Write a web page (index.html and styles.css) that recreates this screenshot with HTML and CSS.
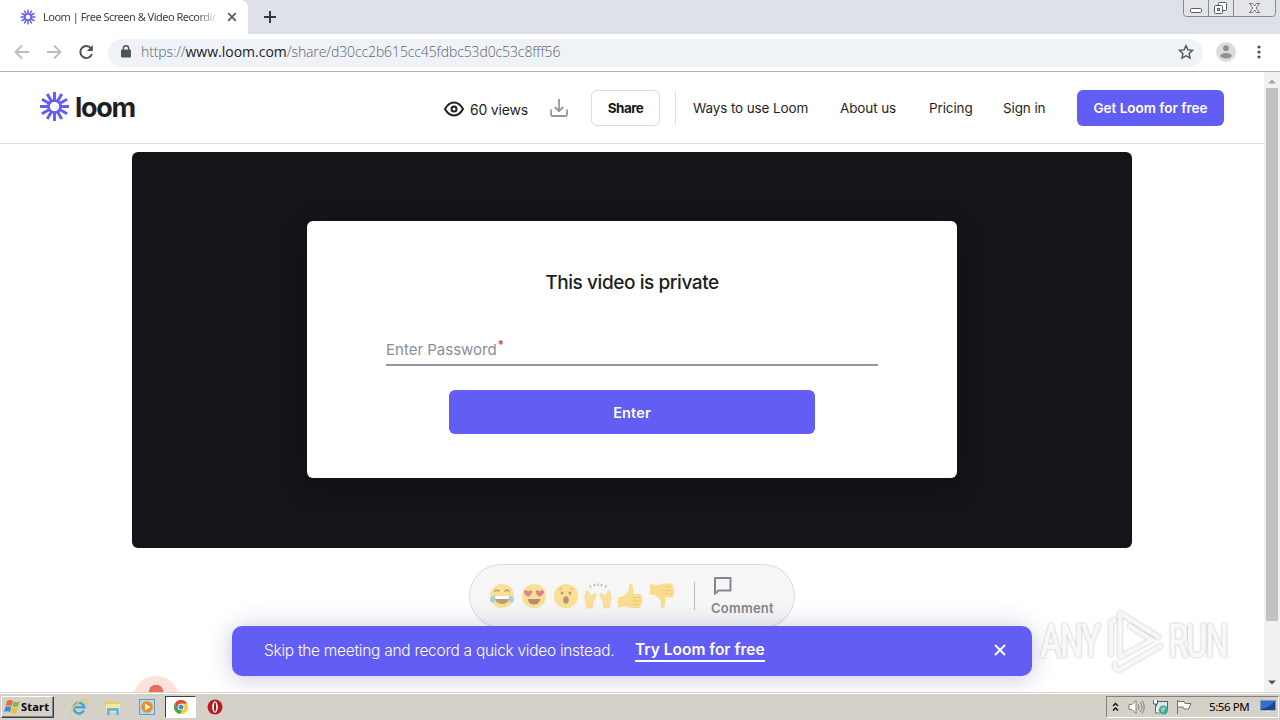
FILE: index.html
```html
<!DOCTYPE html>
<html lang="en">
<head>
<meta charset="utf-8">
<title>Loom | Free Screen &amp; Video Recording</title>
<link rel="stylesheet" href="styles.css">
</head>
<body>
<svg class="defs" width="0" height="0" aria-hidden="true">
  <symbol id="sun" viewBox="0 0 32 32">
    <g fill="none" stroke="#625df5" stroke-width="3">
      <path d="M16 1v10M16 21v10M1 16h10M21 16h10"/>
      <path d="M16 1v10M16 21v10M1 16h10M21 16h10" transform="rotate(30 16 16)"/>
      <path d="M16 1v10M16 21v10M1 16h10M21 16h10" transform="rotate(60 16 16)"/>
      <circle cx="16" cy="16" r="6.3" stroke-width="2.6"/>
    </g>
  </symbol>
</svg>
<div class="tabstrip">
  <div class="tab">
    <svg class="favicon" width="16" height="16"><use href="#sun"/></svg>
    <span class="tab-title">Loom | Free Screen &amp; Video Recordin</span>
    <svg class="tab-close" width="10" height="10" viewBox="0 0 10 10"><path d="M1.2 1.2l7.6 7.6M8.800 1.200l-7.600 7.600" stroke="#5a5d61" stroke-width="1.8"/></svg>
  </div>
  <svg class="new-tab" width="12" height="12" viewBox="0 0 12 12"><path d="M6 0v12M0 6h12" stroke="#34373b" stroke-width="2"/></svg>
  <svg class="window-controls" width="94" height="17" viewBox="0 0 94 17" fill="none">
    <path d="M.5 0v13.500q0 3 3 3h86q3 0 3-3V0" fill="#e3e5e9" stroke="#858a95"/>
    <path d="M25.500 0v16M50.500 0v16" stroke="#858a95"/>
    <rect x="7.500" y="8.500" width="11" height="4" rx="1" fill="#fff" stroke="#555b66"/>
    <rect x="35.500" y="2.500" width="8" height="8" rx="1" fill="#fff" stroke="#555b66"/>
    <rect x="31.500" y="5.500" width="8" height="8" rx="1" fill="#fff" stroke="#555b66"/>
    <rect x="34.500" y="8.500" width="2" height="2" stroke="#555b66"/>
    <path d="M66.500 3.500h3l2 2.500 2-2.500h3L73 8l3.500 4.500h-3l-2-2.500-2 2.500h-3L70 8z" fill="#fff" stroke="#666b75"/>
  </svg>
</div>
<div class="toolbar">
  <svg class="nav" width="94" height="20" viewBox="0 0 94 20" fill="none" stroke="#bbbdc0" stroke-width="1.900">
    <path d="M15 10H1.500M8 3.500L1.500 10 8 16.500M33 10h13.500M40 3.500l6.500 6.500-6.500 6.500"/>
    <path d="M77 6.200A6 6 0 1 0 78 12" stroke="#4e5155" stroke-width="2"/>
    <path d="M78.800 3v6h-6z" fill="#4e5155" stroke="none"/>
  </svg>
  <div class="omnibox">
    <svg width="10" height="13" viewBox="0 0 10 13"><rect y="4.500" width="10" height="8" rx="1" fill="#505357"/><path d="M2.300 5V3.500a2.700 2.700 0 0 1 5.400 0V5" fill="none" stroke="#505357" stroke-width="1.400"/></svg>
    <span class="url">https://<b>www.loom.com</b>/share/d30cc2b615cc45fdbc53d0c53c8fff56</span>
    <svg class="star" width="16" height="16" viewBox="0 0 16 16"><path d="M8 1.700l1.900 4.200 4.600.5-3.400 3.100.9 4.500-4-2.300L4 14l.9-4.500-3.400-3.100 4.600-.5z" fill="none" stroke="#4e5155" stroke-width="1.400"/></svg>
  </div>
  <svg class="avatar" width="20" height="20" viewBox="0 0 20 20"><circle cx="10" cy="10" r="10" fill="#dcdddd"/><circle cx="10" cy="6.300" r="3" fill="#929292"/><ellipse cx="10" cy="13.700" rx="5.800" ry="2.800" fill="#929292"/></svg>
  <svg class="dots" width="4" height="14" viewBox="0 0 4 14" fill="#4e5155"><circle cx="2" cy="2" r="1.600"/><circle cx="2" cy="7" r="1.600"/><circle cx="2" cy="12" r="1.600"/></svg>
</div>
<div class="viewport">
  <main class="page">
    <header class="header">
      <svg class="logo" width="31" height="31"><use href="#sun"/></svg>
      <span class="wordmark">loom</span>
      <div class="views">
        <svg width="20" height="16" viewBox="0 0 20 16" fill="none" stroke="#1f1f21" stroke-width="2"><path d="M1 8q3.600-6.500 9-6.500T19 8q-3.600 6.500-9 6.500T1 8z"/><circle cx="10" cy="8" r="2.500"/></svg>
        <span>60 views</span>
      </div>
      <svg class="download" width="18" height="18" viewBox="0 0 18 18" fill="none" stroke="#96969c" stroke-width="1.800"><path d="M1 10.500v5q0 1.500 1.500 1.500h13q1.500 0 1.500-1.500v-5M9 0v12M4.800 8L9 12.200 13.200 8"/></svg>
      <button class="share">Share</button>
      <nav class="links"><a class="l1">Ways to use Loom</a><a class="l2">About us</a><a class="l3">Pricing</a><a class="l4">Sign in</a></nav>
      <button class="cta">Get Loom for free</button>
    </header>
    <section class="player">
      <form class="gate">
        <h1>This video is private</h1>
        <div class="field"><span>Enter Password</span><i>*</i></div>
        <button class="enter" type="button">Enter</button>
      </form>
    </section>
    <section class="reactions">
      <svg class="emoji" width="188" height="28" viewBox="0 0 188 28">
        <g fill="#fadf94"><circle cx="14" cy="14" r="12"/><circle cx="46" cy="14" r="12"/><circle cx="78" cy="14" r="12"/></g>
        <path d="M6.500 9.500q2.500-2.500 5 0M16.500 9.500q2.500-2.500 5 0" fill="none" stroke="#b59d70" stroke-width="1.500"/>
        <path d="M6 14h16q-1 8-8 8t-8-8z" fill="#b8a07a"/><path d="M7 14h14v3H7z" fill="#fff"/>
        <path d="M7 13.500q-5 1-5 4.500 0 3 3 2.500 3-1 2-7zM21 13.500q5 1 5 4.500 0 3-3 2.500-3-1-2-7z" fill="#a4cfeb"/>
        <path d="M40.500 15c-8-5-4-9 0-5.500 4-3.500 6 1 0 5.500zM51.500 15c-6-4.500-4-9 0-5.500 4-3.500 8 .5 0 5.500z" fill="#dc8491"/>
        <path d="M39.500 17h13q-1.500 5.500-6.500 5.500t-6.500-5.500z" fill="#b78b76"/>
        <circle cx="74" cy="11" r="1.500" fill="#b39b72"/><circle cx="82" cy="11" r="1.500" fill="#b39b72"/><ellipse cx="78" cy="18" rx="2.800" ry="3.800" fill="#b59373"/>
        <path d="M71 7.500l3-1.500M85 7.500L82 6" stroke="#cbb17d"/>
        <g fill="#fadf9b" stroke="#f0d18e" stroke-width=".5">
          <path d="M98.500 9q1.800-1 2.500 1.500l1 3h2q2-3.500 4-1.500.8 1-.5 3l-2.500 5.500-.5 5.500h-6l-.5-5.500q-1.500-2-1.200-6z"/>
          <path d="M121.500 9q-1.800-1-2.500 1.500l-1 3h-2q-2-3.500-4-1.500-.8 1 .5 3l2.500 5.500.5 5.500h6l.5-5.500q1.500-2 1.200-6z"/>
        </g>
        <path d="M103 5.500l-1.500-2M106.500 4V2M110 4V1.500M113.500 4V2M117 5.500l1.500-2" stroke="#a8a49c" stroke-width="1.200"/>
        <g id="hand"><path d="M130 15.500l6-1.500 4.500-5 .5-5.500q.2-2.500 2.300-1.800 2.800 1 1.700 10.300h6.500q2.500 0 2 2.500 1.500 1.200.5 3 1 1.500-.4 3 .5 1.800-.9 2.800.3 2.700-2 2.700h-7.200l-5.500-1.800-8 1.300z" fill="#fadc91"/><path d="M145 15.500h7M145 19h7M145 22.300h6" stroke="#ecc877"/></g>
        <use href="#hand" transform="translate(32 27.500) scale(1 -1)"/>
      </svg>
      <span class="divider"></span>
      <div class="comment">
        <svg width="20" height="20" viewBox="0 0 20 20"><path d="M2 2h15.500v12.500H5.500L2 17.800z" fill="none" stroke="#85858f" stroke-width="2" stroke-linejoin="round"/></svg>
        <span>Comment</span>
      </div>
    </section>
    <aside class="banner">
      <span class="pitch">Skip the meeting and record a quick video instead.</span>
      <a class="try">Try Loom for free</a>
      <svg width="12" height="12" viewBox="0 0 12 12"><path d="M1 1l10 10M11 1L1 11" stroke="#fff" stroke-width="1.900"/></svg>
    </aside>
    <div class="record"></div>
    <div class="watermark">
      <span>ANY</span>
      <svg width="60" height="66" viewBox="0 0 60 66" fill="none" stroke="#f7f7f8" stroke-width="4.500" stroke-linejoin="round">
        <path d="M6 48V14l5-3M15 42V5l40 25M15 21v28l32-17-24-15M10 54v6l4 2 43-25"/>
      </svg>
      <span>RUN</span>
    </div>
  </main>
  <div class="scrollbar">
    <svg width="8" height="5" viewBox="0 0 8 5"><path d="M0 4.500L4 .5l4 4z" fill="#a3a3a3"/></svg>
    <span class="thumb"></span>
    <svg class="down" width="8" height="5" viewBox="0 0 8 5"><path d="M0 .5l4 4 4-4z" fill="#505050"/></svg>
  </div>
</div>
<footer class="taskbar">
  <div class="start">
    <svg width="17" height="16" viewBox="0 0 17 16"><path d="M3 2q3-2 6 0L7.500 7q-3-1.500-5.800 0z" fill="#e96b31"/><path d="M9.800 2.500q3 1.500 6-.2l-1.600 5q-3 1.400-5.900 0z" fill="#83b93c"/><path d="M1.500 8q3-1.600 5.700 0L6 13q-3-1.500-6 0z" fill="#3c8fce"/><path d="M8 8.500q3 1.300 6 0l-1.500 5q-3 1.500-6 0z" fill="#f5bf35"/></svg>
    <span>Start</span>
  </div>
  <svg class="ie" width="18" height="18" viewBox="0 0 18 18" fill="none"><path d="M13.800 12.500A5.300 5.300 0 1 1 14.300 9.300H5" stroke="#41a6dc" stroke-width="2.600"/><path d="M2 15.500C-2 14 11-1 16.500 2q1.300 1-.5 3.500" stroke="#e8c852" stroke-width="1.400"/></svg>
  <svg class="folder" width="16" height="16" viewBox="0 0 16 16"><path d="M0 2h6l1 1h7v10H0z" fill="#e9cd6a"/><path d="M1 5h14v8H1z" fill="#f6e79f"/><path d="M2 16V9h12v7h-3v-4H5v4z" fill="#69b9df"/></svg>
  <svg class="media" width="16" height="16" viewBox="0 0 16 16"><rect x=".5" y=".5" width="15" height="15" fill="#b4daf2" stroke="#649ac3"/><circle cx="8" cy="8" r="5.800" fill="#f28b1c"/><path d="M6 4.500v7L11.500 8z" fill="#fff"/></svg>
  <div class="active"><svg width="14" height="14" viewBox="0 0 14 14"><circle cx="7" cy="7" r="7" fill="#f4ca35"/><path d="M.9 3.500A7 7 0 0 1 13.100 3.500H7L4 8.500z" fill="#dc4839"/><path d="M.9 3.500L5 9.500l3 .5-2 4A7 7 0 0 1 .9 3.500z" fill="#43a456"/><circle cx="7" cy="7" r="3.300" fill="#fff"/><circle cx="7" cy="7" r="2.500" fill="#4b8dd8"/></svg></div>
  <svg class="opera" width="16" height="16" viewBox="0 0 16 16"><circle cx="8" cy="8" r="7.500" fill="#b91c20"/><ellipse cx="8" cy="8" rx="2.800" ry="5.700" fill="#fff"/><ellipse cx="8" cy="8" rx="1" ry="4.800" fill="#8e181a"/></svg>
  <div class="tray">
    <svg width="7" height="10" viewBox="0 0 7 10" fill="none" stroke="#111" stroke-width="1.400"><path d="M1 4l2.500-2.500L6 4M1 8.500L3.500 6 6 8.500"/></svg>
    <svg class="speaker" width="17" height="16" viewBox="0 0 17 16" fill="none" stroke="#808080"><path d="M1 5.500h3l4-4v13l-4-4H1z" fill="#fff"/><path d="M10 5q2 3 0 6M12 3q4 5 0 10M14 1.500q4.500 6.500 0 13"/></svg>
    <svg class="network" width="17" height="16" viewBox="0 0 17 16"><rect x="4.500" y="2.500" width="11" height="9" fill="#d5eaf0" stroke="#59656b"/><path d="M1.500 1v4h4V1M3.500 5v9h4" fill="#fff" stroke="#666"/><circle cx="11.500" cy="11" r="4.500" fill="#40a9a3"/><path d="M9 10q3-4 5 0-2 0-2 3-3 0-3-3" fill="#9bd8a5"/></svg>
    <svg class="flag" width="17" height="16" viewBox="0 0 17 16"><path d="M1.500 1v14M2 2.500h6l1 2h6l-2.500 5.500H8l-1-2H2" fill="#fff" stroke="#747474"/></svg>
    <time>5:56 PM</time>
    <svg class="desktop" width="16" height="13" viewBox="0 0 16 13"><rect x=".5" y=".5" width="15" height="9.500" fill="#3770c6" stroke="#7898c8"/><path d="M1 9q8-1 14-8v9H1z" fill="#1c4597"/><path d="M5 11.500h6" stroke="#dce8f7"/></svg>
  </div>
</footer>
</body>
</html>
```
FILE: styles.css
```css
* { box-sizing: border-box; }
body { margin: 0; width: 1280px; height: 720px; overflow: hidden; display: flex; flex-direction: column; background: #fff; font-family: Inter, sans-serif; color: #1f1f21; }
svg { display: block; flex: none; }
span, a, time { white-space: nowrap; }
button { font-family: inherit; border: 0; padding: 0; }
.defs { position: absolute; }

.tabstrip { height: 34px; flex: none; display: flex; background: #dee1e7; }
.tab { width: 248px; height: 34px; padding: 0 11px 0 20px; display: flex; align-items: center; background: #fff; border-radius: 0 8px 0 0; }
.tab-title { margin-left: 7px; width: 175px; font: 11px/16px "Noto Sans", sans-serif; letter-spacing: -.5px; color: #3c4043; -webkit-mask-image: linear-gradient(90deg, #000 88%, transparent); mask-image: linear-gradient(90deg, #000 88%, transparent); }
.tab-close { margin-left: 9px; }
.new-tab { margin: 11px 0 0 16px; }
.window-controls { margin-left: auto; margin-right: 3px; }

.toolbar { height: 38px; flex: none; display: flex; align-items: center; padding: 0 19px 0 14px; border-bottom: 1px solid #b3b3b3; }
.nav { margin-top: -1px; }
.omnibox { width: 1095px; height: 28px; display: flex; align-items: center; padding: 0 9px 0 13px; border-radius: 14px; background: #eff2f6; }
.omnibox svg { margin-top: -2px; }
.url { margin: -2px 0 0 10px; font: 300 14px/20px "Open Sans", sans-serif; letter-spacing: -.11px; color: #5f6368; }
.url b { font-weight: 400; color: #202124; letter-spacing: 0; }
.omnibox .star { margin-left: auto; }
.avatar { margin: -2px 0 0 13px; }
.dots { margin: -1px 0 0 auto; }

.viewport { height: 620px; flex: none; display: flex; }
.page { position: relative; width: 1264px; overflow: hidden; }
.header { height: 72px; display: flex; align-items: center; padding: 0 40px 0 39px; border-bottom: 1px solid #dfdfe1; }
.logo { margin-top: -2px; }
.wordmark { margin: 0 0 1px 5px; width: 62px; font-size: 27px; font-weight: 700; letter-spacing: -1.350px; }
.views { margin-left: 307px; width: 84px; display: flex; align-items: center; gap: 6px; padding-top: 3px; font-size: 14px; letter-spacing: -.2px; }
.download { margin-left: 22px; }
.share { margin-left: 23px; width: 69px; height: 36px; border: 1px solid #dadade; border-radius: 6px; background: #fff; font-size: 13.500px; font-weight: 700; letter-spacing: -.6px; color: #17171b; }
.links { margin-left: 15px; width: 402px; height: 34px; border-left: 1px solid #dfdfe2; display: flex; align-items: center; padding-left: 17px; font-size: 13.500px; letter-spacing: -.12px; }
.l1 { width: 147px; }
.l2 { width: 89px; }
.l3 { width: 74px; }
.cta { width: 147px; height: 36px; border-radius: 6px; background: #625df5; color: #fff; font-size: 13.500px; font-weight: 600; }

.player { width: 1000px; height: 396px; margin: 8px 0 0 132px; padding-top: 69px; border-radius: 6px; background: #141419; }
.gate { width: 650px; height: 257px; margin: 0 auto; padding-top: 50px; display: flex; flex-direction: column; align-items: center; border-radius: 6px; background: #fff; box-shadow: 0 8px 24px rgba(0,0,0,.25); }
.gate h1 { margin: 0; font: 500 19px/24px Inter, sans-serif; letter-spacing: -.42px; }
.field { margin-top: 42px; width: 492px; height: 29px; display: flex; border-bottom: 2px solid #9595a0; color: #8d8d98; font-size: 15px; line-height: 26px; }
.field i { margin-left: 1px; color: #bd3a3a; font: 12px/16px Inter, sans-serif; }
.enter { margin-top: 24px; width: 366px; height: 44px; border-radius: 6px; background: #625df5; color: #fff; font-size: 14.500px; font-weight: 600; letter-spacing: .15px; }

.reactions { width: 326px; height: 64px; margin: 16px 0 0 469px; padding-left: 18px; display: flex; align-items: center; border: 1px solid #dadadd; border-radius: 32px; background: #f6f6f7; }
.divider { margin-left: 18px; width: 1px; height: 28px; background: #bbbbc2; }
.comment { margin-left: 15px; color: #85858f; }
.comment svg { margin-left: 3px; }
.comment span { display: block; margin-top: 4px; padding-left: 1px; font-size: 13px; line-height: 17px; font-weight: 600; letter-spacing: .25px; }

.banner { position: absolute; left: 232px; top: 554px; width: 800px; height: 50px; padding: 0 26px 0 32px; display: flex; align-items: center; border-radius: 10px; background: #625df5; color: #fff; box-shadow: 0 2px 24px rgba(55,50,145,.28); }
.pitch { width: 371px; font: 300 15.500px/22px Inter, sans-serif; letter-spacing: -.28px; }
.try { font-size: 15.500px; line-height: 20px; font-weight: 600; border-bottom: 2px solid #fff; }
.banner svg { margin: -2px 0 0 auto; }
.record { position: absolute; left: 133px; top: 604px; width: 46px; height: 46px; border-radius: 50%; background: radial-gradient(circle at 23px 16px, #e6705b 0 7px, #fde1da 7.500px); }
.watermark { position: absolute; left: 1040px; top: 536px; width: 194px; height: 66px; display: flex; align-items: center; gap: 3px; color: #f8f8f9; filter: drop-shadow(0 0 1px #b8b8bd); }
.watermark span { width: 62px; flex: none; font: 400 46px/60px "Roboto Condensed", Roboto, sans-serif; letter-spacing: -3px; -webkit-text-stroke: 1px #f8f8f9; transform: scaleX(.84); transform-origin: left; }

.scrollbar { width: 16px; display: flex; flex-direction: column; align-items: center; padding: 7px 0; background: #f1f1f1; }
.thumb { width: 12px; height: 533px; margin-top: 4px; background: #c1c1c1; }
.down { margin-top: auto; }

.taskbar { height: 28px; flex: none; display: flex; align-items: center; border-top: 1px solid #d5d1c8; box-shadow: inset 0 1px #fff; padding: 0 1px; background: #d5d0c8; font-family: "DejaVu Sans", sans-serif; }
.start { width: 53px; height: 22px; display: flex; align-items: center; padding-left: 2px; border: 1px solid; border-color: #fff #404040 #404040 #fff; box-shadow: inset -1px -1px #808080; color: #000; }
.start span { font: 700 11px/16px "Noto Sans", sans-serif; letter-spacing: .2px; }
.ie { margin-left: 16px; }
.folder { margin-left: 17px; }
.media { margin-left: 18px; }
.active { margin-left: 10px; width: 31px; height: 22px; display: grid; place-items: center; background: #fff; border: 1px solid; border-color: #404040 #fff #fff #404040; }
.opera { margin-left: 11px; }
.tray { margin-left: auto; width: 173px; height: 22px; display: flex; align-items: center; padding-left: 5px; border: 1px solid; border-color: #858078 #fff #fff #858078; }
.speaker { margin-left: 9px; }
.network { margin-left: 7px; }
.flag { margin-left: 7px; }
.tray time { margin-left: 16px; width: 51px; font: 11.500px/16px "Noto Sans", sans-serif; letter-spacing: -.4px; color: #000; }
.desktop { margin-left: 0; }
```
